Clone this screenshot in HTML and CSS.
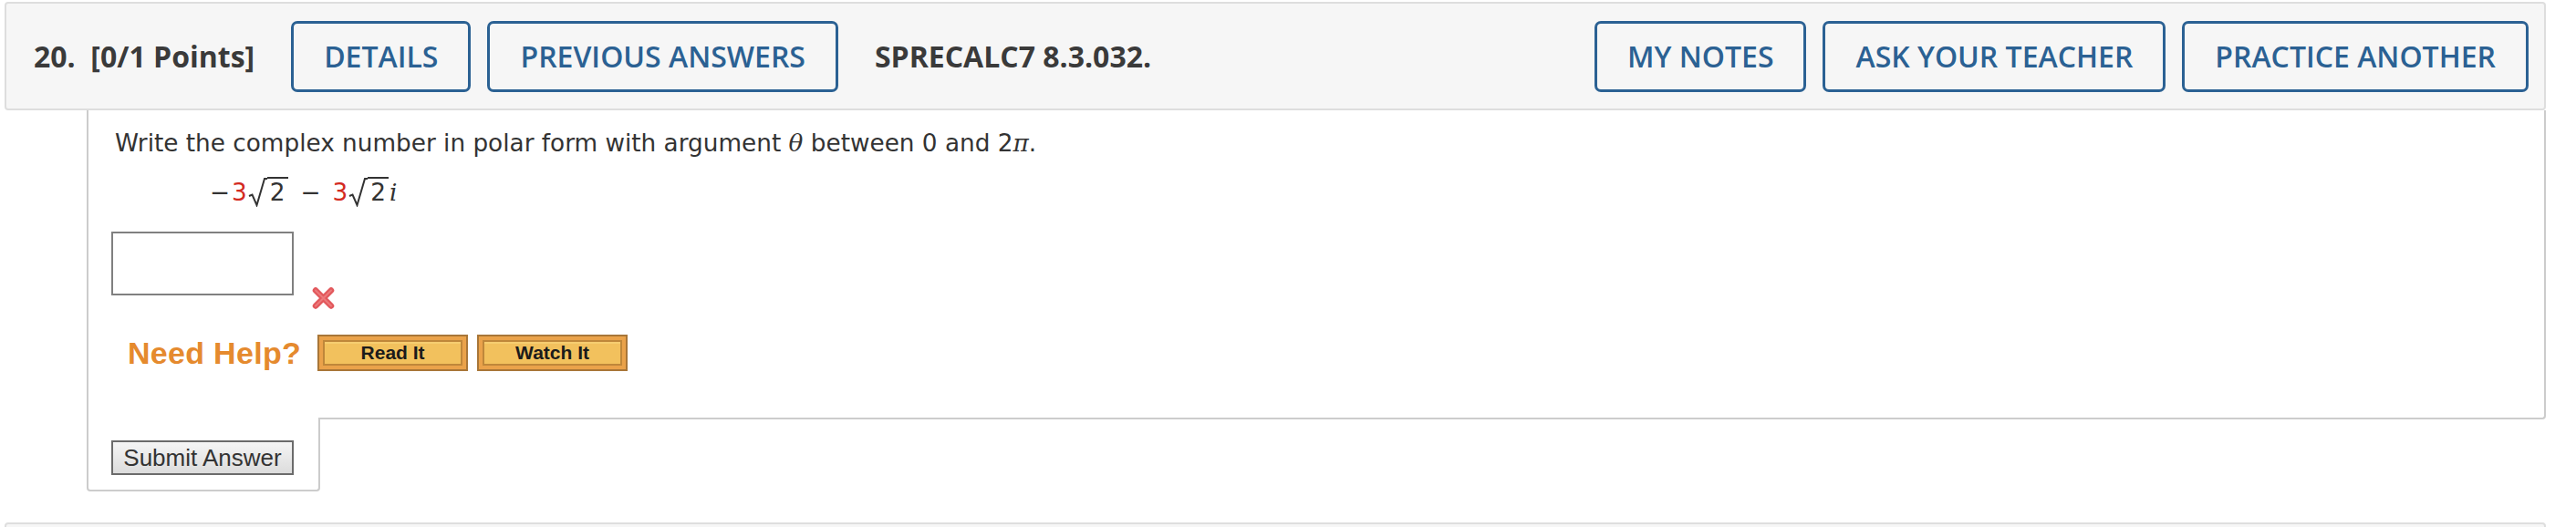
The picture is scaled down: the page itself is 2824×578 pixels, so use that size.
FILE: index.html
```html
<!DOCTYPE html>
<html lang="en">
<head>
<meta charset="utf-8">
<title>Question 20</title>
<link rel="stylesheet" href="styles.css">
</head>
<body>
<div class="page">
  <div class="qhead">
    <span class="qnum">20.&nbsp; [0/1 Points]</span>
    <button class="hbtn first">DETAILS</button>
    <button class="hbtn">PREVIOUS ANSWERS</button>
    <span class="qref">SPRECALC7 8.3.032.</span>
    <span class="spacer"></span>
    <button class="hbtn">MY NOTES</button>
    <button class="hbtn">ASK YOUR TEACHER</button>
    <button class="hbtn">PRACTICE ANOTHER</button>
  </div>

  <div class="qbody">
    <p class="prompt">Write the complex number in polar form with argument <i>θ</i> between 0 and 2<i>π</i>.</p>
    <p class="math"><span class="neg">−</span><span class="red">3</span><span class="sqrt"><svg class="radsign" width="22" height="32" viewBox="0 0 22 32"><path d="M2 20 L5.5 18.5 L10.5 30 L19 1 L22 1" fill="none" stroke="#333" stroke-width="2" stroke-linejoin="miter"/></svg><span class="rnd">2</span></span><span class="op">−</span><span class="red">3</span><span class="sqrt"><svg class="radsign" width="22" height="32" viewBox="0 0 22 32"><path d="M2 20 L5.5 18.5 L10.5 30 L19 1 L22 1" fill="none" stroke="#333" stroke-width="2" stroke-linejoin="miter"/></svg><span class="rnd">2</span></span><i class="imag">i</i></p>
    <div class="answer-row">
      <input class="answer" type="text" aria-label="answer">
      <svg class="wrong" width="27" height="26" viewBox="0 0 27 26"><path d="M5 4.5 L22 21.5 M22 4.5 L5 21.5" stroke="#e2585c" stroke-width="6.5" stroke-linecap="round"/><path d="M5 4.5 L22 21.5 M22 4.5 L5 21.5" stroke="#ec7a7c" stroke-width="2" stroke-linecap="round"/></svg>
    </div>
    <div class="help-row">
      <span class="need-help">Need Help?</span>
      <button class="hlp">Read It</button>
      <button class="hlp">Watch It</button>
    </div>
  </div>
  <div class="submit-tab">
    <button class="submit">Submit Answer</button>
  </div>

  <div class="qhead next"></div>
</div>
</body>
</html>
```

FILE: styles.css
```css
html, body {
  margin: 0;
  padding: 0;
  background: #ffffff;
}

.page {
  padding: 2px 33px 0 5px;
}

.qhead {
  box-sizing: border-box;
  height: 119px;
  display: flex;
  align-items: center;
  padding: 0 17px 0 30px;
  background: #f6f6f6;
  border: 2px solid #dedede;
  border-radius: 4px;
  font-family: "Open Sans", "Liberation Sans", sans-serif;
  color: #3a3a3a;
}

.qnum,
.qref {
  font-size: 32px;
  font-weight: 700;
  white-space: pre;
}

.qref {
  margin-left: 40px;
}

.spacer {
  flex: 1;
}

.hbtn {
  box-sizing: border-box;
  height: 78px;
  padding: 0 33px;
  margin-left: 18px;
  border: 3px solid #2b6193;
  border-radius: 7px;
  background: transparent;
  color: #2b6193;
  font-family: "Open Sans", "Liberation Sans", sans-serif;
  font-size: 32px;
  font-weight: 600;
  white-space: nowrap;
}

.hbtn.first {
  margin-left: 40px;
}

.qbody {
  margin-left: 90px;
  padding: 20px 28px 51px 29px;
  border: 2px solid #cccccc;
  border-top: none;
  border-radius: 0 0 4px 0;
  font-family: "DejaVu Sans", Verdana, sans-serif;
  font-size: 26.3px;
  color: #333333;
}

.prompt,
.math {
  margin: 0;
  line-height: 32px;
}

.prompt i,
.math i {
  font-family: "DejaVu Serif", "Liberation Serif", serif;
}

.math {
  margin-top: 22px;
  margin-left: 104px;
  white-space: nowrap;
}

.neg {
  margin-right: 2px;
}

.op {
  margin: 0 13px 0 14px;
}

.red {
  color: #d32a1f;
}

.sqrt {
  white-space: nowrap;
}

.radsign {
  vertical-align: -7px;
}

.rnd {
  border-top: 2px solid #333333;
  padding: 0 3px 0 3px;
}

.imag {
  margin-left: 1px;
}

.answer-row {
  margin-top: 27px;
  display: flex;
  align-items: flex-start;
}

.answer {
  box-sizing: border-box;
  width: 200px;
  height: 70px;
  margin: 0 0 0 -4px;
  border: 2px solid #808080;
  background: #ffffff;
  padding: 0;
}

.wrong {
  margin: 60px 0 0 19px;
}

.help-row {
  margin-top: 27px;
  display: flex;
  align-items: center;
  height: 40px;
}

.need-help {
  margin-left: 14px;
  font-family: "Liberation Sans", Arial, sans-serif;
  font-weight: 700;
  font-size: 34px;
  color: #e58a2e;
  letter-spacing: 0.3px;
}

.hlp {
  box-sizing: border-box;
  width: 165px;
  height: 40px;
  margin-left: 18px;
  padding: 0;
  border: 2px solid #a87638;
  background: #f2c15d;
  box-shadow: inset 0 0 0 4px #eaa24a, inset 0 0 0 6px #bf873a, inset 0 8px 0 0 #f6cd70;
  font-family: "Liberation Sans", Arial, sans-serif;
  font-weight: 700;
  font-size: 21px;
  color: #1b1b1b;
}

.hlp + .hlp {
  margin-left: 10px;
}

.submit-tab {
  position: relative;
  box-sizing: border-box;
  width: 256px;
  margin: -2px 0 0 90px;
  padding: 25px 0 16px 25px;
  background: #ffffff;
  border: 2px solid #cccccc;
  border-top: none;
  border-radius: 0 0 4px 4px;
}

.submit {
  box-sizing: border-box;
  width: 200px;
  height: 38px;
  padding: 0;
  border: 2px solid #6b6b6b;
  background: linear-gradient(#f5f5f5, #dcdcdc);
  font-family: "Liberation Sans", Arial, sans-serif;
  font-size: 26px;
  color: #333333;
  line-height: 32px;
}

.qhead.next {
  margin-top: 34px;
  height: 60px;
}
```
